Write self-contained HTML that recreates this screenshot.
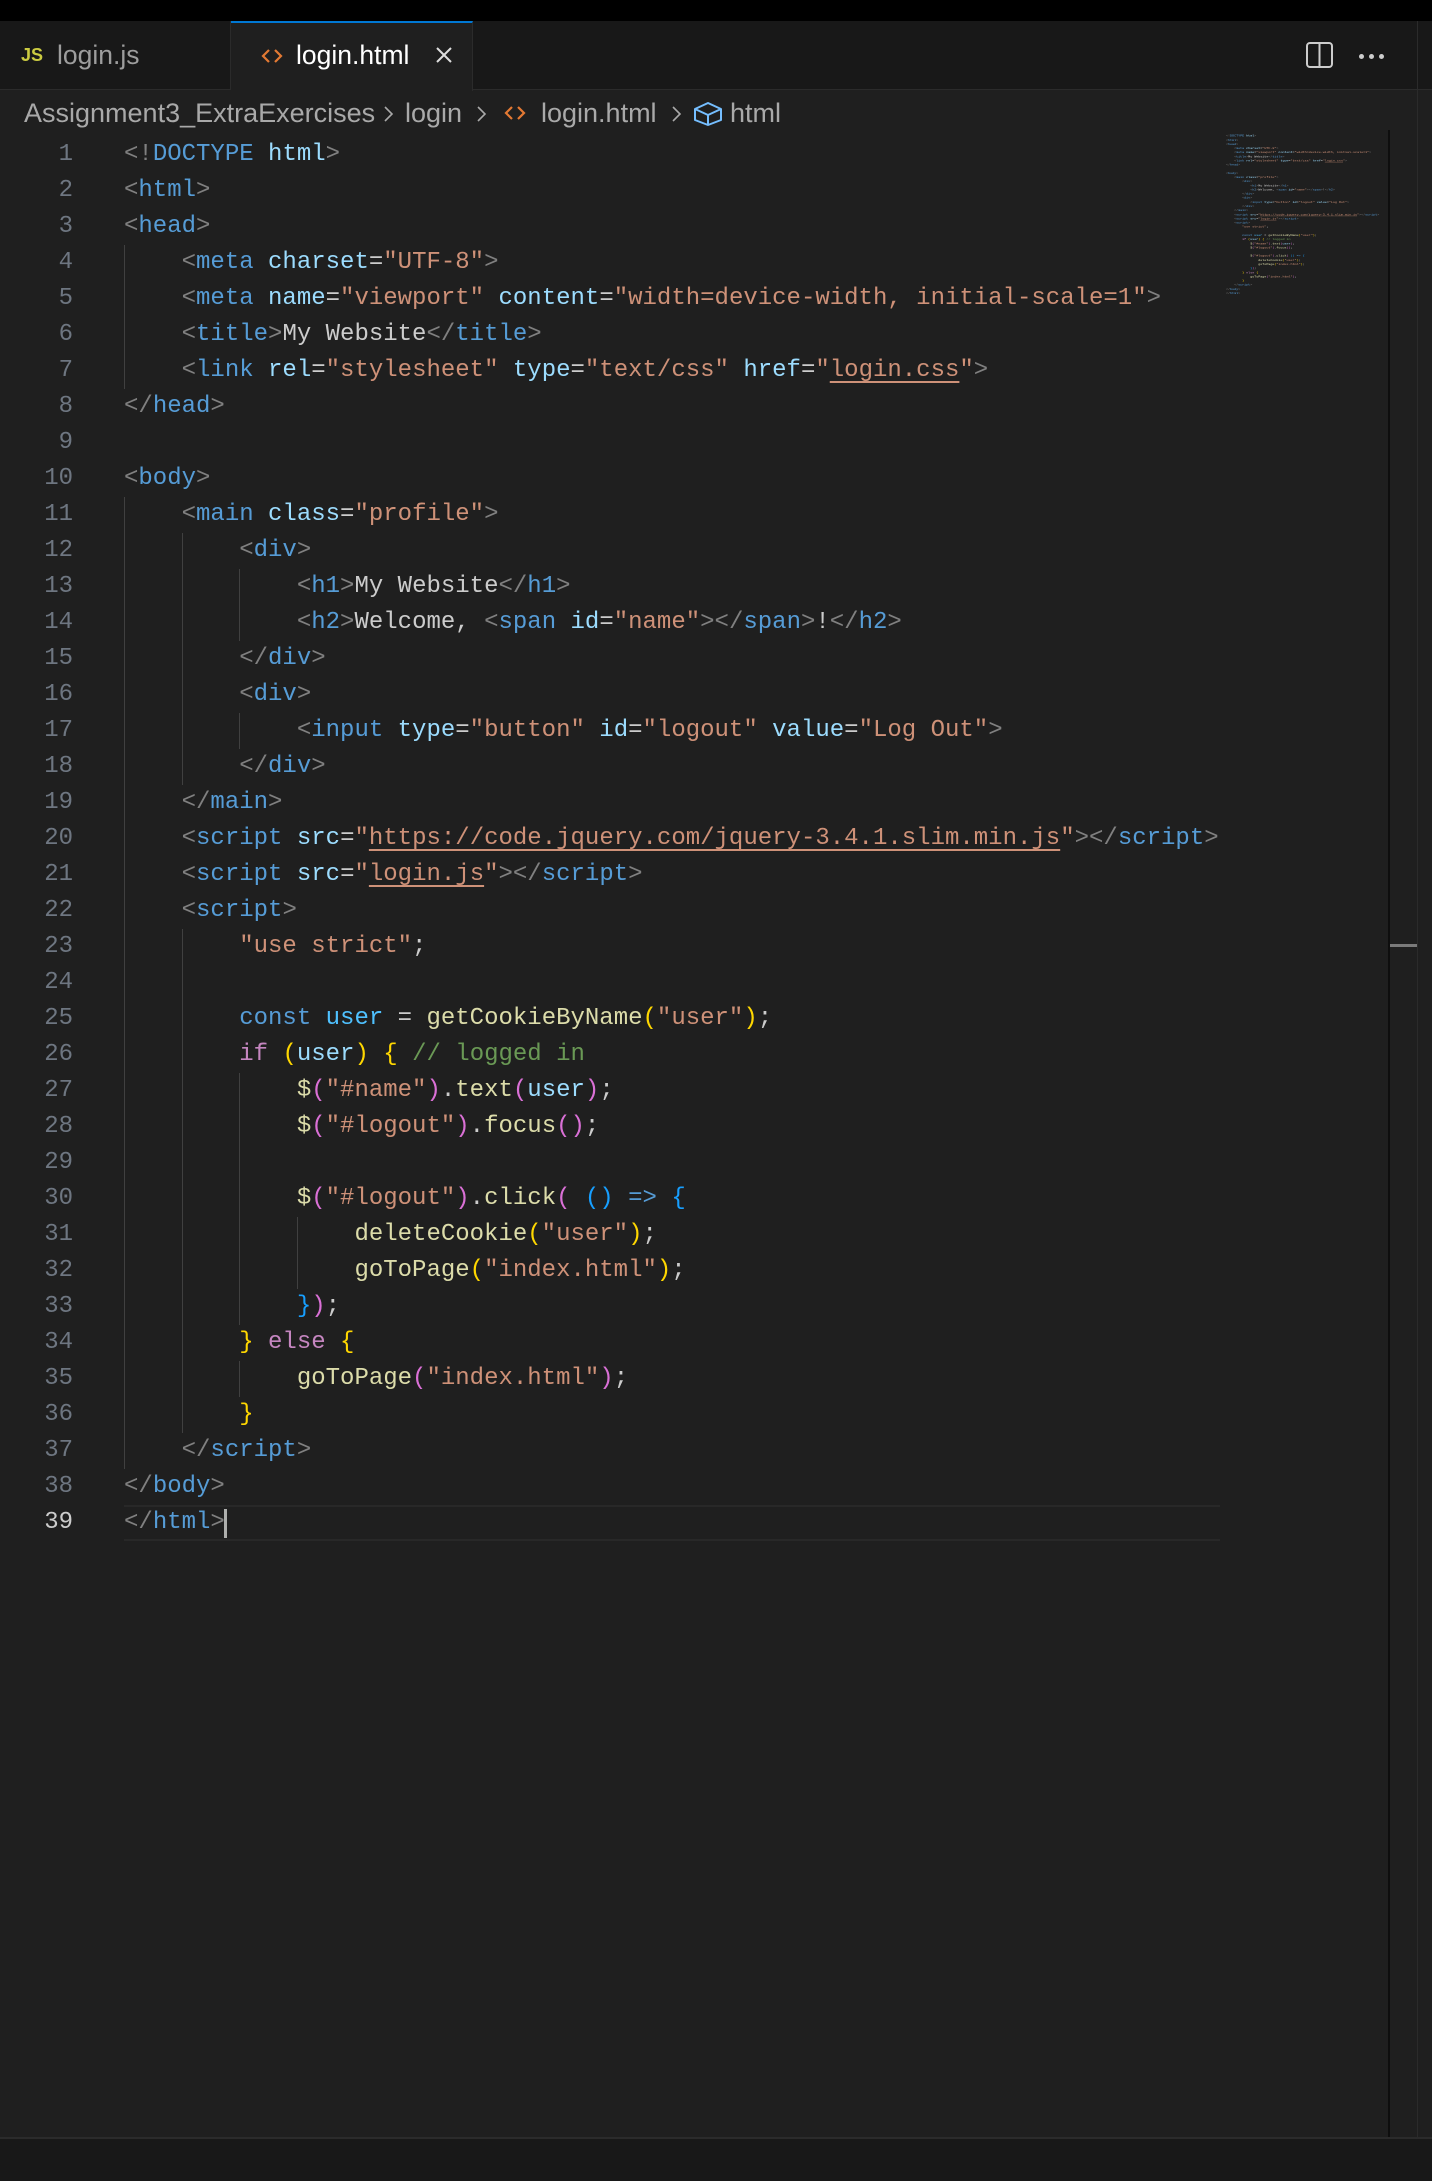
<!DOCTYPE html>
<html><head><meta charset="utf-8"><style>
*{margin:0;padding:0;box-sizing:border-box}
body{width:1432px;height:2181px;background:#1f1f1f;position:relative;overflow:hidden;font-family:"Liberation Sans",sans-serif}
.abs{position:absolute}
#top{left:0;top:0;width:1432px;height:21px;background:#000}
#tabs{left:0;top:21px;width:1432px;height:69px;background:#181818;border-bottom:1px solid #2b2b2b}
.tab{position:absolute;top:0;height:69px;font-size:26.5px;line-height:69px;white-space:nowrap}
#code{left:0;top:137px;width:1220px;height:1990px;overflow:hidden;font-family:"Liberation Mono",monospace;font-size:24px;}
.ln{position:absolute;left:0;width:1220px;height:36px;line-height:36px;white-space:pre;color:#cccccc}
.ln .n{position:absolute;left:0;width:73px;text-align:right;color:#6e7681}
.ln .c{position:absolute;left:124px}
.p{color:#808080}.t{color:#569cd6}.a{color:#9cdcfe}.s{color:#ce9178}.f{color:#dcdcaa}.k{color:#c586c0}.cm{color:#6a9955}.v{color:#9cdcfe}.cv{color:#4fc1ff}.b1{color:#ffd700}.b2{color:#da70d6}.b3{color:#179fff}.u{text-decoration:underline;text-underline-offset:5px}
.g{position:absolute;width:1px;background:#404040}
#mini{left:1226px;top:134px;width:1300px;transform-origin:0 0;transform:scale(0.14,0.115);font-family:"Liberation Mono",monospace;font-size:24px}
#mini .ln{width:1300px}
</style></head><body>
<div class="abs" id="top"></div>
<div class="abs" id="tabs">
  <div class="tab" style="left:0;width:231px;border-right:1px solid #2b2b2b">
    <span class="abs" style="left:21px;top:0;font-size:18px;font-weight:bold;color:#cbcb41">JS</span>
    <span class="abs" style="left:57px;color:#9d9d9d">login.js</span>
  </div>
  <div class="tab" style="left:231px;width:242px;height:70px;background:#1f1f1f;border-top:2px solid #0078d4;border-right:1px solid #2b2b2b">
    <svg class="abs" style="left:30px;top:22px" width="22" height="22" viewBox="0 0 22 22"><path d="M8 5L2 11l6 6M14 5l6 6-6 6" stroke="#e37933" stroke-width="2.2" fill="none"/></svg>
    <span class="abs" style="left:65px;top:-2px;color:#ffffff">login.html</span>
    <svg class="abs" style="left:204px;top:23px" width="18" height="18" viewBox="0 0 18 18"><path d="M2 2L16 16M16 2L2 16" stroke="#ddd" stroke-width="2"/></svg>
  </div>
  <svg class="abs" style="left:1306px;top:21px" width="27" height="27" viewBox="0 0 27 27"><rect x="1" y="1" width="25" height="24" rx="3" stroke="#ccc" stroke-width="2" fill="none"/><path d="M13.5 1v24" stroke="#ccc" stroke-width="2"/></svg>
  <div class="abs" style="left:1359px;top:33px;width:24px;height:6px">
    <span class="abs" style="left:0;width:5px;height:5px;border-radius:50%;background:#ccc"></span>
    <span class="abs" style="left:10px;width:5px;height:5px;border-radius:50%;background:#ccc"></span>
    <span class="abs" style="left:20px;width:5px;height:5px;border-radius:50%;background:#ccc"></span>
  </div>
</div>
<div class="abs" style="left:1417px;top:21px;width:1px;height:2116px;background:#2b2b2b"></div>
<!-- breadcrumbs -->
<div class="abs" style="left:0;top:96px;width:1220px;height:34px;font-size:27px;line-height:34px;color:#a9a9a9;white-space:nowrap">
  <span class="abs" style="left:24px">Assignment3_ExtraExercises</span>
  <svg class="abs" style="left:383px;top:9px" width="12" height="18" viewBox="0 0 12 18"><path d="M2 2l7 7-7 7" stroke="#a9a9a9" stroke-width="1.6" fill="none"/></svg>
  <span class="abs" style="left:405px">login</span>
  <svg class="abs" style="left:476px;top:9px" width="12" height="18" viewBox="0 0 12 18"><path d="M2 2l7 7-7 7" stroke="#a9a9a9" stroke-width="1.6" fill="none"/></svg>
  <svg class="abs" style="left:504px;top:7px" width="22" height="20" viewBox="0 0 22 20"><path d="M8 4L2 10l6 6M14 4l6 6-6 6" stroke="#e37933" stroke-width="2.2" fill="none"/></svg>
  <span class="abs" style="left:541px">login.html</span>
  <svg class="abs" style="left:671px;top:9px" width="12" height="18" viewBox="0 0 12 18"><path d="M2 2l7 7-7 7" stroke="#a9a9a9" stroke-width="1.6" fill="none"/></svg>
  <svg class="abs" style="left:693px;top:5px" width="30" height="26" viewBox="0 0 30 26"><path d="M15 2L28 8v11l-13 5-13-5V8z M2 8l13 6 13-6 M15 14v10" stroke="#75beff" stroke-width="2" fill="none" stroke-linejoin="round"/></svg>
  <span class="abs" style="left:730px">html</span>
</div>
<!-- current line highlight -->
<div class="abs" style="left:124px;top:1505px;width:1096px;height:36px;border-top:2px solid #282828;border-bottom:2px solid #282828"></div>
<div class="abs" style="left:224px;top:1509px;width:3px;height:29px;background:#aeafad"></div>
<div class="abs" id="code">
<div class="g" style="left:124px;top:108px;height:144px"></div>
<div class="g" style="left:124px;top:360px;height:972px"></div>
<div class="g" style="left:182px;top:396px;height:252px"></div>
<div class="g" style="left:182px;top:792px;height:504px"></div>
<div class="g" style="left:239px;top:432px;height:72px"></div>
<div class="g" style="left:239px;top:576px;height:36px"></div>
<div class="g" style="left:239px;top:936px;height:252px"></div>
<div class="g" style="left:239px;top:1224px;height:36px"></div>
<div class="g" style="left:297px;top:1080px;height:72px"></div>
<div id="lines">
<div class="ln" style="top:0"><span class="n">1</span><span class="c"><span class="p">&lt;!</span><span class="t">DOCTYPE</span> <span class="a">html</span><span class="p">&gt;</span></span></div>
<div class="ln" style="top:36px"><span class="n">2</span><span class="c"><span class="p">&lt;</span><span class="t">html</span><span class="p">&gt;</span></span></div>
<div class="ln" style="top:72px"><span class="n">3</span><span class="c"><span class="p">&lt;</span><span class="t">head</span><span class="p">&gt;</span></span></div>
<div class="ln" style="top:108px"><span class="n">4</span><span class="c">    <span class="p">&lt;</span><span class="t">meta</span> <span class="a">charset</span>=<span class="s">"UTF-8"</span><span class="p">&gt;</span></span></div>
<div class="ln" style="top:144px"><span class="n">5</span><span class="c">    <span class="p">&lt;</span><span class="t">meta</span> <span class="a">name</span>=<span class="s">"viewport"</span> <span class="a">content</span>=<span class="s">"width=device-width, initial-scale=1"</span><span class="p">&gt;</span></span></div>
<div class="ln" style="top:180px"><span class="n">6</span><span class="c">    <span class="p">&lt;</span><span class="t">title</span><span class="p">&gt;</span>My Website<span class="p">&lt;/</span><span class="t">title</span><span class="p">&gt;</span></span></div>
<div class="ln" style="top:216px"><span class="n">7</span><span class="c">    <span class="p">&lt;</span><span class="t">link</span> <span class="a">rel</span>=<span class="s">"stylesheet"</span> <span class="a">type</span>=<span class="s">"text/css"</span> <span class="a">href</span>=<span class="s">"<span class="u">login.css</span>"</span><span class="p">&gt;</span></span></div>
<div class="ln" style="top:252px"><span class="n">8</span><span class="c"><span class="p">&lt;/</span><span class="t">head</span><span class="p">&gt;</span></span></div>
<div class="ln" style="top:288px"><span class="n">9</span><span class="c"></span></div>
<div class="ln" style="top:324px"><span class="n">10</span><span class="c"><span class="p">&lt;</span><span class="t">body</span><span class="p">&gt;</span></span></div>
<div class="ln" style="top:360px"><span class="n">11</span><span class="c">    <span class="p">&lt;</span><span class="t">main</span> <span class="a">class</span>=<span class="s">"profile"</span><span class="p">&gt;</span></span></div>
<div class="ln" style="top:396px"><span class="n">12</span><span class="c">        <span class="p">&lt;</span><span class="t">div</span><span class="p">&gt;</span></span></div>
<div class="ln" style="top:432px"><span class="n">13</span><span class="c">            <span class="p">&lt;</span><span class="t">h1</span><span class="p">&gt;</span>My Website<span class="p">&lt;/</span><span class="t">h1</span><span class="p">&gt;</span></span></div>
<div class="ln" style="top:468px"><span class="n">14</span><span class="c">            <span class="p">&lt;</span><span class="t">h2</span><span class="p">&gt;</span>Welcome, <span class="p">&lt;</span><span class="t">span</span> <span class="a">id</span>=<span class="s">"name"</span><span class="p">&gt;&lt;/</span><span class="t">span</span><span class="p">&gt;</span>!<span class="p">&lt;/</span><span class="t">h2</span><span class="p">&gt;</span></span></div>
<div class="ln" style="top:504px"><span class="n">15</span><span class="c">        <span class="p">&lt;/</span><span class="t">div</span><span class="p">&gt;</span></span></div>
<div class="ln" style="top:540px"><span class="n">16</span><span class="c">        <span class="p">&lt;</span><span class="t">div</span><span class="p">&gt;</span></span></div>
<div class="ln" style="top:576px"><span class="n">17</span><span class="c">            <span class="p">&lt;</span><span class="t">input</span> <span class="a">type</span>=<span class="s">"button"</span> <span class="a">id</span>=<span class="s">"logout"</span> <span class="a">value</span>=<span class="s">"Log Out"</span><span class="p">&gt;</span></span></div>
<div class="ln" style="top:612px"><span class="n">18</span><span class="c">        <span class="p">&lt;/</span><span class="t">div</span><span class="p">&gt;</span></span></div>
<div class="ln" style="top:648px"><span class="n">19</span><span class="c">    <span class="p">&lt;/</span><span class="t">main</span><span class="p">&gt;</span></span></div>
<div class="ln" style="top:684px"><span class="n">20</span><span class="c">    <span class="p">&lt;</span><span class="t">script</span> <span class="a">src</span>=<span class="s">"<span class="u">https://code.jquery.com/jquery-3.4.1.slim.min.js</span>"</span><span class="p">&gt;&lt;/</span><span class="t">script</span><span class="p">&gt;</span></span></div>
<div class="ln" style="top:720px"><span class="n">21</span><span class="c">    <span class="p">&lt;</span><span class="t">script</span> <span class="a">src</span>=<span class="s">"<span class="u">login.js</span>"</span><span class="p">&gt;&lt;/</span><span class="t">script</span><span class="p">&gt;</span></span></div>
<div class="ln" style="top:756px"><span class="n">22</span><span class="c">    <span class="p">&lt;</span><span class="t">script</span><span class="p">&gt;</span></span></div>
<div class="ln" style="top:792px"><span class="n">23</span><span class="c">        <span class="s">"use strict"</span>;</span></div>
<div class="ln" style="top:828px"><span class="n">24</span><span class="c"></span></div>
<div class="ln" style="top:864px"><span class="n">25</span><span class="c">        <span class="t">const</span> <span class="cv">user</span> = <span class="f">getCookieByName</span><span class="b1">(</span><span class="s">"user"</span><span class="b1">)</span>;</span></div>
<div class="ln" style="top:900px"><span class="n">26</span><span class="c">        <span class="k">if</span> <span class="b1">(</span><span class="v">user</span><span class="b1">)</span> <span class="b1">{</span> <span class="cm">// logged in</span></span></div>
<div class="ln" style="top:936px"><span class="n">27</span><span class="c">            <span class="f">$</span><span class="b2">(</span><span class="s">"#name"</span><span class="b2">)</span>.<span class="f">text</span><span class="b2">(</span><span class="v">user</span><span class="b2">)</span>;</span></div>
<div class="ln" style="top:972px"><span class="n">28</span><span class="c">            <span class="f">$</span><span class="b2">(</span><span class="s">"#logout"</span><span class="b2">)</span>.<span class="f">focus</span><span class="b2">()</span>;</span></div>
<div class="ln" style="top:1008px"><span class="n">29</span><span class="c"></span></div>
<div class="ln" style="top:1044px"><span class="n">30</span><span class="c">            <span class="f">$</span><span class="b2">(</span><span class="s">"#logout"</span><span class="b2">)</span>.<span class="f">click</span><span class="b2">(</span> <span class="b3">()</span> <span class="t">=&gt;</span> <span class="b3">{</span></span></div>
<div class="ln" style="top:1080px"><span class="n">31</span><span class="c">                <span class="f">deleteCookie</span><span class="b1">(</span><span class="s">"user"</span><span class="b1">)</span>;</span></div>
<div class="ln" style="top:1116px"><span class="n">32</span><span class="c">                <span class="f">goToPage</span><span class="b1">(</span><span class="s">"index.html"</span><span class="b1">)</span>;</span></div>
<div class="ln" style="top:1152px"><span class="n">33</span><span class="c">            <span class="b3">}</span><span class="b2">)</span>;</span></div>
<div class="ln" style="top:1188px"><span class="n">34</span><span class="c">        <span class="b1">}</span> <span class="k">else</span> <span class="b1">{</span></span></div>
<div class="ln" style="top:1224px"><span class="n">35</span><span class="c">            <span class="f">goToPage</span><span class="b2">(</span><span class="s">"index.html"</span><span class="b2">)</span>;</span></div>
<div class="ln" style="top:1260px"><span class="n">36</span><span class="c">        <span class="b1">}</span></span></div>
<div class="ln" style="top:1296px"><span class="n">37</span><span class="c">    <span class="p">&lt;/</span><span class="t">script</span><span class="p">&gt;</span></span></div>
<div class="ln" style="top:1332px"><span class="n">38</span><span class="c"><span class="p">&lt;/</span><span class="t">body</span><span class="p">&gt;</span></span></div>
<div class="ln" style="top:1368px"><span class="n" style="color:#cccccc">39</span><span class="c"><span class="p">&lt;/</span><span class="t">html</span><span class="p">&gt;</span></span></div>
</div>
</div>
<!-- minimap -->
<div class="abs" style="left:1220px;top:130px;width:168px;height:2007px;background:#1f1f1f"></div>
<div class="abs" id="mini"></div>
<script>
document.getElementById('mini').innerHTML=document.getElementById('lines').innerHTML.replace(/<span class="n"[^>]*>\d+<\/span>/g,'');
document.querySelectorAll('#mini .c').forEach(function(e){e.style.left='0'});
</script>
<div class="abs" style="left:1388px;top:130px;width:2px;height:2007px;background:#0e0e0e"></div>
<div class="abs" style="left:1390px;top:944px;width:27px;height:3px;background:#7a7a7a"></div>
<div class="abs" style="left:0;top:2137px;width:1432px;height:2px;background:#2b2b2b"></div>
<div class="abs" style="left:0;top:2139px;width:1432px;height:42px;background:#181818"></div>
</body></html>
